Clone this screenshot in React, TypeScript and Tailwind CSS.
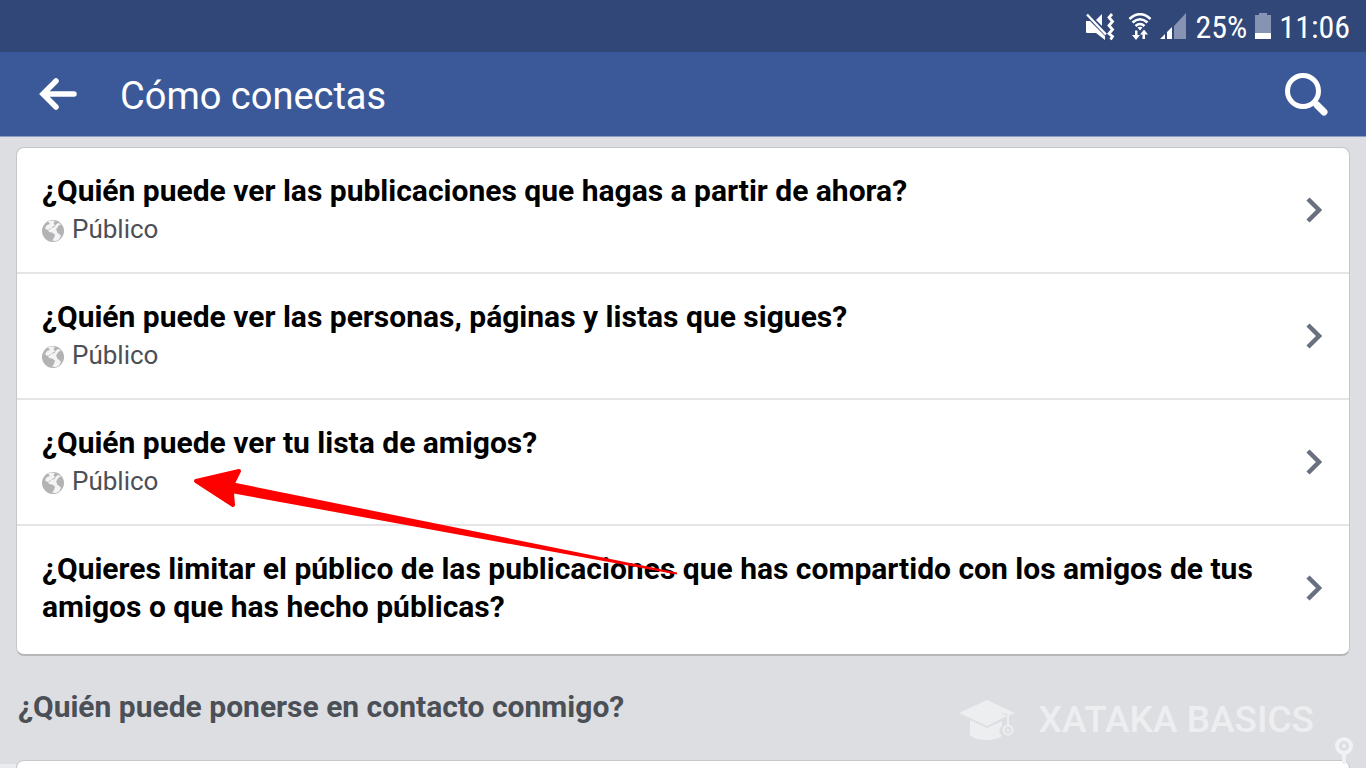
type Setting = {
  title: string;
  audience?: string;
  highlighted?: boolean;
};

const settings: Setting[] = [
  { title: "¿Quién puede ver las publicaciones que hagas a partir de ahora?", audience: "Público" },
  { title: "¿Quién puede ver las personas, páginas y listas que sigues?", audience: "Público" },
  { title: "¿Quién puede ver tu lista de amigos?", audience: "Público", highlighted: true },
  {
    title:
      "¿Quieres limitar el público de las publicaciones que has compartido con los amigos de tus amigos o que has hecho públicas?",
  },
];

function MuteIcon() {
  return (
    <svg className="h-7 w-8" viewBox="0 0 32 28" fill="none" aria-hidden="true">
      <path d="M2 8h4l15 15v4l-9-7H3q-1 0-1-1z" fill="#fff" />
      <path d="M12 7l6-6v12z" fill="#fff" />
      <path d="M3 1.500l19 20" stroke="#fff" strokeWidth="2.400" />
      <path d="M28 1l-3 3.500 3.500 4-3.500 4 3.500 4-3.500 4 3.500 3-2 3" stroke="#fff" strokeWidth="2.800" />
    </svg>
  );
}

function WifiIcon() {
  return (
    <svg className="h-7 w-6" viewBox="0 0 24 28" fill="none" aria-hidden="true">
      <g stroke="#fff" strokeWidth="2.600">
        <path d="M1.500 6q10.500-9.500 21 0" />
        <path d="M4.500 9.500q7.500-6.500 15 0" />
        <path d="M7.500 13q4.500-4 9 0" />
      </g>
      <path d="M9.500 14.500q2.500-1.500 5 0L12 17.500z" fill="#fff" />
      <path d="M7 17.500h2.500v4.500H12L8 27l-4-5h3zM14.500 26v-4.500H12l4-5 4 5h-3V26z" fill="#fff" />
    </svg>
  );
}

function SignalIcon() {
  return (
    <svg className="h-7 w-7" viewBox="0 0 28 28" aria-hidden="true">
      <path d="M0 26l5-5v5zM7 19l5-5v12H7z" fill="#fff" />
      <path d="M14 13L26 0v26H14z" fill="#8793b3" />
    </svg>
  );
}

function BatteryIcon() {
  return (
    <svg className="h-7 w-4" viewBox="0 0 16 28" aria-hidden="true">
      <path d="M4 0h8v2h4v18H0V2h4z" fill="#8793b3" />
      <path d="M0 20h16v6H0z" fill="#fff" />
    </svg>
  );
}

function GlobeIcon() {
  return (
    <svg className="mt-1 size-[22px]" viewBox="0 0 22 22" aria-hidden="true">
      <circle cx="11" cy="11" r="11" fill="#b3b3b5" />
      <path
        d="M6 1.500L9 .500l4 .500-1.500 2 1.500 2.500-3 1.500L8 9.500l-2 0 1 2.500 3 .500 3 2-1 3.500-2 2.500 4 .500 3-1.500 2-3.500-2.500-3-.500-2 1-2-2-1.500 2.500-2.500 2-1L16 3l-2 1.500L12.500 7 9 8 5 10 3 8l2-3 3-1z"
        fill="#fff"
        fillRule="evenodd"
        opacity=".85"
      />
      <path d="M14 9l3-2 3 2 1.500 3-1 3-2-1-3-1z" fill="#b3b3b5" />
    </svg>
  );
}

function PointerArrow() {
  return (
    <svg
      className="pointer-events-none absolute top-16 left-[174px] z-10 h-[112px] w-[488px]"
      viewBox="0 0 488 112"
      fill="#f00"
      aria-hidden="true"
    >
      <path d="M5 17L48 7L42 19L41 29L42 41Z" stroke="#f00" strokeWidth="4" strokeLinejoin="round" />
      <path d="M40 18L486 108.500L486 110.500L40 29Z" />
    </svg>
  );
}

function SettingRow({ title, audience, highlighted }: Setting) {
  return (
    <li className="relative border-b-2 border-[#e5e5e7] last:border-b-0 last:pb-1">
      <a href="#" className="flex items-center justify-between pt-6 pr-[27px] pb-6 pl-[25px]">
        <div className="max-w-[1220px]">
          <h2 className="text-[30px] leading-[38px] font-bold text-black">{title}</h2>
          {audience && (
            <p className="flex items-center gap-2 text-[26px] leading-[38px] text-[#4b4f56]">
              <GlobeIcon />
              {audience}
            </p>
          )}
        </div>
        <svg className="h-7 w-4 shrink-0" viewBox="0 0 16 28" fill="none" aria-hidden="true">
          <path d="M2 3l11 11L2 25" stroke="#697080" strokeWidth="4.500" />
        </svg>
      </a>
      {highlighted && <PointerArrow />}
    </li>
  );
}

function Watermark() {
  return (
    <div className="absolute top-10 right-9 flex items-center gap-6 text-[#edeef0]">
      <svg className="h-[42px] w-14" viewBox="0 0 56 42" aria-hidden="true">
        <path d="M0 14L28 1l28 13-5 2-10-3 7 4-20 10z" fill="currentColor" />
        <path d="M11 21l17 8 15-7v5a6 6 0 0 0 0 10q-6 4-15 4-12 0-17-5z" fill="currentColor" />
        <g fill="none" stroke="currentColor" strokeWidth="2">
          <path d="M49 15v11" />
          <circle cx="49" cy="31" r="4.500" />
        </g>
        <circle cx="49" cy="31" r="1.500" fill="currentColor" />
      </svg>
      <span className="text-[37px] leading-[48px] font-medium">XATAKA BASICS</span>
    </div>
  );
}

export default function App() {
  return (
    <div className="relative flex h-screen flex-col overflow-hidden bg-[#dddee2] font-[Roboto,sans-serif]">
      <div className="flex h-[52px] shrink-0 items-center justify-end bg-[#304778] pt-0.5 pr-4 text-white">
        <div className="flex items-center gap-2">
          <div className="flex items-center gap-3">
            <MuteIcon />
            <WifiIcon />
          </div>
          <SignalIcon />
        </div>
        <div className="ml-2 flex items-center gap-2 font-['Roboto_Condensed',Roboto,sans-serif] text-[32px]">
          <span>25%</span>
          <BatteryIcon />
          <span>11:06</span>
        </div>
      </div>

      <header className="flex h-[85px] shrink-0 items-center border-b border-[#8a9cc3] bg-[#3b5998] px-9 text-white">
        <button type="button" aria-label="Atrás">
          <svg className="h-10 w-11" viewBox="0 0 44 40" fill="none" aria-hidden="true">
            <path d="M20 7L7 20l13 13M7 20h31" stroke="#fff" strokeWidth="5.500" strokeLinecap="round" />
          </svg>
        </button>
        <h1 className="ml-10 flex-1 pt-1 text-[38px]">Cómo conectas</h1>
        <button type="button" aria-label="Buscar">
          <svg className="size-12" viewBox="0 0 48 48" fill="none" aria-hidden="true">
            <circle cx="21" cy="21" r="15.500" stroke="#fff" strokeWidth="5" />
            <path d="M32 32l2 2" stroke="#fff" strokeWidth="4" />
            <path d="M35 35l7 7" stroke="#fff" strokeWidth="7" strokeLinecap="round" />
          </svg>
        </button>
      </header>

      <main className="px-4 pt-2.5">
        <ul className="rounded-lg border border-b-2 border-[#c6c7ca] border-b-[#b5b6b8] bg-white">
          {settings.map((setting) => (
            <SettingRow key={setting.title} {...setting} />
          ))}
        </ul>

        <div className="relative">
          <h2 className="pt-8 pb-[34px] pl-0.5 text-[30px] leading-[38px] font-bold text-[#4b4f56]">
            ¿Quién puede ponerse en contacto conmigo?
          </h2>
          <Watermark />
          <svg className="absolute -right-1 -bottom-1 h-7 w-5" viewBox="0 0 20 28" fill="none" aria-hidden="true">
            <circle cx="10" cy="10" r="7" stroke="#f0f1f3" strokeWidth="4" />
            <circle cx="10" cy="10" r="2" fill="#f0f1f3" />
            <path d="M10 18v10" stroke="#f0f1f3" strokeWidth="4" />
          </svg>
        </div>

        <div className="h-32 rounded-lg border border-[#c6c7ca] bg-white" />
      </main>
      <div className="absolute bottom-0 left-0 h-1 w-4 bg-[#ebecef]" />
    </div>
  );
}
